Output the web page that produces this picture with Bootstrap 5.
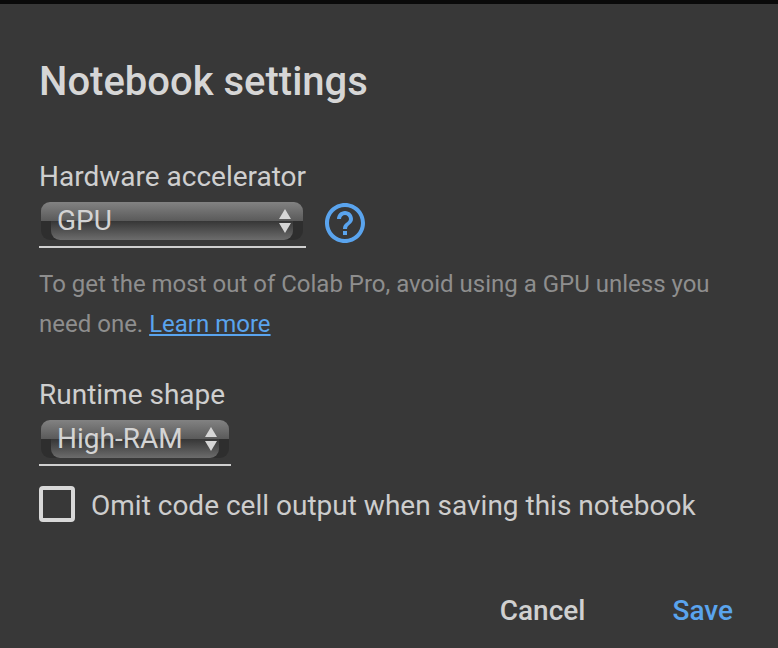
<!DOCTYPE html>
<html lang="en">
<head>
<meta charset="utf-8">
<title>Notebook settings</title>
<link href="https://cdn.jsdelivr.net/npm/bootstrap@5.3.0/dist/css/bootstrap.min.css" rel="stylesheet">
<style>
html,body{height:100%;}
body{background:#383838;color:#d4d4d4;font-family:Roboto,"Liberation Sans",sans-serif;overflow:hidden;}
.dlg-top{height:4px;background:#0a0a0a;}
.dlg{height:644px;padding:0 39px;}
.dlg-title{font-size:40px;font-weight:500;line-height:40px;margin:0;padding-top:58px;color:#d6d6d6;}
.fld-label{font-size:28px;line-height:30px;color:#cfcfcf;}
.fld-first{margin-top:60px;}
.fld-second{margin-top:36px;}
.sel-wrap{border-bottom:2px solid #cfcfcf;padding:10px 3px 6px 2px;}
.sel-gpu{width:267px;}
.sel-ram{width:192px;padding-right:2px;}
.glass{position:relative;height:38px;border-radius:9px;overflow:hidden;padding:0 10px 0 16px;font-size:28px;line-height:36px;color:#d4d4d4;background:linear-gradient(#828282,#5a5a5a 50%,#2e2e2e 50%,#2e2e2e);}
.glass::before{content:"";position:absolute;left:10px;right:10px;top:19px;bottom:0;border-radius:0 0 9px 9px;background:linear-gradient(#363636,#6c6c6c);}
.glass-txt,.glass-arrows{position:relative;}
.glass-arrows{width:13px;gap:4px;margin-right:2px;}
.arr-up,.arr-dn{width:0;height:0;border-left:6.5px solid transparent;border-right:6.5px solid transparent;}
.arr-up{border-bottom:10px solid #d6d6d6;}
.arr-dn{border-top:10px solid #d6d6d6;}
.help-ico{width:48px;height:48px;margin-left:15px;margin-top:7px;fill:#5aa4ee;}
.hint{font-size:24px;line-height:40px;color:#8e8e8e;margin:16px 0 0;white-space:nowrap;}
.hint a{color:#5aa4ee;}
.chk{width:36px;height:36px;border:4px solid #d8d8d8;border-radius:4px;flex:none;}
.chk-row{margin-top:20px;gap:16px;}
.chk-txt{font-size:28px;line-height:36px;padding-top:2px;color:#cdcdcd;white-space:nowrap;}
.acts{margin-top:69px;gap:87px;padding-right:6px;}
.acts .btn{font-size:28px;font-weight:500;line-height:36px;padding:0;border:0;color:#d0d0d0;}
.acts .btn.act-save{color:#5aa4ee;}
</style>
</head>
<body>
<div class="dlg-top"></div>
<div class="dlg">
  <h1 class="dlg-title">Notebook settings</h1>
  <div class="fld-label fld-first">Hardware accelerator</div>
  <div class="d-flex align-items-start">
    <div class="sel-wrap sel-gpu">
      <div class="glass d-flex justify-content-between align-items-center">
        <span class="glass-txt">GPU</span>
        <span class="glass-arrows d-flex flex-column align-items-center"><span class="arr-up"></span><span class="arr-dn"></span></span>
      </div>
    </div>
    <svg class="help-ico" viewBox="0 0 24 24">
      <path d="M11 18h2v-2h-2v2zm1-16C6.48 2 2 6.48 2 12s4.48 10 10 10 10-4.48 10-10S17.52 2 12 2zm0 18c-4.41 0-8-3.59-8-8s3.59-8 8-8 8 3.59 8 8-3.59 8-8 8zm0-14c-2.21 0-4 1.79-4 4h2c0-1.1.9-2 2-2s2 .9 2 2c0 2-3 1.75-3 5h2c0-2.25 3-2.5 3-5 0-2.21-1.79-4-4-4z"/>
    </svg>
  </div>
  <p class="hint">To get the most out of Colab Pro, avoid using a GPU unless you<br>need one. <a href="#">Learn more</a></p>
  <div class="fld-label fld-second">Runtime shape</div>
  <div class="sel-wrap sel-ram">
    <div class="glass d-flex justify-content-between align-items-center">
      <span class="glass-txt">High-RAM</span>
      <span class="glass-arrows d-flex flex-column align-items-center"><span class="arr-up"></span><span class="arr-dn"></span></span>
    </div>
  </div>
  <div class="d-flex align-items-start chk-row">
    <span class="chk"></span>
    <span class="chk-txt">Omit code cell output when saving this notebook</span>
  </div>
  <div class="d-flex justify-content-end acts">
    <button type="button" class="btn">Cancel</button>
    <button type="button" class="btn act-save">Save</button>
  </div>
</div>
<script src="https://cdn.jsdelivr.net/npm/bootstrap@5.3.0/dist/js/bootstrap.bundle.min.js"></script>
</body>
</html>
